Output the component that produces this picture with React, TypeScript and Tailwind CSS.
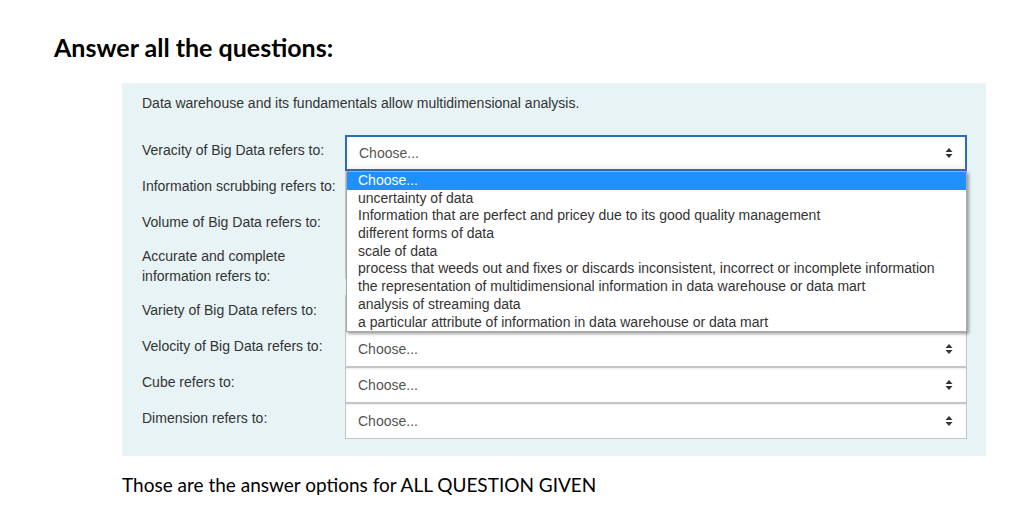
import React from "react";

const questions: { label: string; tall?: boolean }[] = [
  { label: "Veracity of Big Data refers to:" },
  { label: "Information scrubbing refers to:" },
  { label: "Volume  of Big Data refers to:" },
  { label: "Accurate and complete information refers to:", tall: true },
  { label: "Variety of Big Data refers to:" },
  { label: "Velocity of Big Data refers to:" },
  { label: "Cube refers to:" },
  { label: "Dimension refers to:" },
];

const options = [
  "Choose...",
  "uncertainty of data",
  "Information that are perfect and pricey due to its good quality management",
  "different forms of data",
  "scale of data",
  "process that weeds out and fixes or discards inconsistent, incorrect or incomplete information",
  "the representation of multidimensional information in data warehouse or data mart",
  "analysis of streaming data",
  "a particular attribute of information in data warehouse or data mart",
];

function Arrows() {
  return (
    <svg width="8" height="12" viewBox="0 0 8 12" className="shrink-0">
      <path d="M4 1L7.5 5H0.5Z" fill="#333" />
      <path d="M4 11L7.5 7H0.5Z" fill="#333" />
    </svg>
  );
}

function SelectBox({ focused, covered }: { focused?: boolean; covered?: boolean }) {
  return (
    <div
      className={
        focused
          ? "h-[36px] flex items-center justify-between pl-[12px] pr-[12px] bg-white border-2 border-[#2c6db6] shadow-[inset_0_-3px_4px_rgba(0,0,0,0.06)]"
          : "h-[36px] flex items-center justify-between pl-[12px] pr-[13px] bg-white border border-[#c4c7ca] shadow-[inset_0_1px_2px_rgba(0,0,0,0.08)]"
      }
    >
      {/* boxes under the open list keep their place but show nothing */}
      {!covered && <span className="text-[#555] text-[14px]">Choose...</span>}
      {!covered && <Arrows />}
    </div>
  );
}

export default function App() {
  return (
    <div
      className="w-[1024px] h-[520px] bg-white overflow-hidden"
      style={{ fontFamily: "'Liberation Sans', Arial, sans-serif" }}
    >
      <h1
        className="pl-[54px] pt-[31px] text-[25px] font-bold text-black leading-[32px]"
        style={{ fontFamily: "Lato, 'Open Sans', sans-serif" }}
      >
        Answer all the questions:
      </h1>

      <div className="ml-[122px] mt-[20px] w-[864px] bg-[#e7f3f5] pl-[20px] pr-[19px] pt-[10px] pb-[17px]">
        <p className="text-[14px] text-[#333] leading-[20px]">
          Data warehouse and its fundamentals allow multidimensional analysis.
        </p>

        <div className="relative mt-[22px]">
          {questions.map((q, i) => (
            <div key={i} className={q.tall ? "flex h-[52px]" : "flex h-[36px]"}>
              <label
                className={
                  "w-[203px] shrink-0 pr-[8px] text-[14px] text-[#333] leading-[20px] " +
                  (q.tall ? "pt-[3px]" : "pt-[5px]")
                }
              >
                {q.label}
              </label>
              <div className="flex-1">
                <SelectBox focused={i === 0} covered={i >= 1 && i <= 4} />
              </div>
            </div>
          ))}

          {/* open dropdown of first select */}
          <div className="absolute left-[204px] top-[36px] w-[621px] bg-white border border-[#a9a9a9] shadow-[2px_2px_3px_rgba(0,0,0,0.35)]">
            {options.map((o, i) => (
              <div
                key={i}
                className={
                  i === 0
                    ? "h-[17.7px] pl-[11px] bg-[#1e90ff] text-white text-[14px] leading-[17px] whitespace-nowrap"
                    : "h-[17.7px] pl-[11px] text-[#333] text-[14px] leading-[17px] whitespace-nowrap"
                }
              >
                {o}
              </div>
            ))}
          </div>
        </div>
      </div>

      <p
        className="pl-[122px] pt-[16px] text-[19px] text-black leading-[26px]"
        style={{ fontFamily: "Lato, 'Open Sans', sans-serif" }}
      >
        Those are the answer options for ALL QUESTION GIVEN
      </p>
    </div>
  );
}
